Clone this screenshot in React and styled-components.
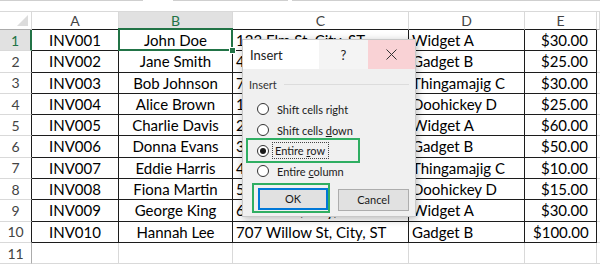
import React from "react";
import styled, { createGlobalStyle, css } from "styled-components";

const GREEN = "#217346";
const MARK = "#2fae62";
const GRID = "#d9d9d9";
const INK = "#1c1c1c";

const rows = [
    ["INV001", "John Doe", "123 Elm St, City, ST", "Widget A", "$30.00"],
    ["INV002", "Jane Smith", "456 Oak St, City, ST", "Gadget B", "$25.00"],
    ["INV003", "Bob Johnson", "789 Pine St, City, ST", "Thingamajig C", "$30.00"],
    ["INV004", "Alice Brown", "101 Maple St, City, ST", "Doohickey D", "$25.00"],
    ["INV005", "Charlie Davis", "202 Birch St, City, ST", "Widget A", "$60.00"],
    ["INV006", "Donna Evans", "303 Cedar St, City, ST", "Gadget B", "$50.00"],
    ["INV007", "Eddie Harris", "404 Spruce St, City, ST", "Thingamajig C", "$10.00"],
    ["INV008", "Fiona Martin", "505 Ash St, City, ST", "Doohickey D", "$15.00"],
    ["INV009", "George King", "606 Fir St, City, ST", "Widget A", "$30.00"],
    ["INV010", "Hannah Lee", "707 Willow St, City, ST", "Gadget B", "$100.00"],
];
const letters = ["A", "B", "C", "D", "E"];
const aligns = ["center", "center", "left", "left", "right"];

export default function App() {
    return (
        <>
            <GlobalStyle/>
            <Page>
                <TopStrip>
                    <StripSegment $w={143}/>
                    <StripGap $w={30}/>
                    <StripSegment $w={115}/>
                    <StripGap $w={4}/>
                    <StripSegment $w={308}/>
                </TopStrip>
                <Sheet>
                    <Corner><CornerMark/></Corner>
                    {letters.map((l) => (
                        <ColHead key={l} $selected={l === "B"}>{l}</ColHead>
                    ))}
                    <ColHead $rest/>
                    {rows.map((r, i) => (
                        <React.Fragment key={i}>
                            <RowHead $selected={i === 0} $data>{i + 1}</RowHead>
                            {r.map((v, j) => (
                                <Cell key={j} $align={aligns[j]} $active={i === 0 && j === 1}>
                                    {v}
                                </Cell>
                            ))}
                            <EmptyCell $rest/>
                        </React.Fragment>
                    ))}
                    <RowHead>11</RowHead>
                    {letters.map((l) => <EmptyCell key={l}/>)}
                    <EmptyCell $rest/>
                </Sheet>

                <Dialog>
                    <TitleBar>
                        <Title>Insert</Title>
                        <HelpButton>?</HelpButton>
                        <CloseButton>
                            <svg width="11" height="11" viewBox="0 0 11 11">
                                <path d="M0.5 0.5 L10.5 10.5 M10.5 0.5 L0.5 10.5" stroke="#333" strokeWidth="1"/>
                            </svg>
                        </CloseButton>
                    </TitleBar>
                    <Body>
                        <GroupLabel>Insert<GroupLine/></GroupLabel>
                        <Options>
                            <Option><Radio/><span>Shift cells right</span></Option>
                            <Option><Radio/><span>Shift cells <u>d</u>own</span></Option>
                            <Option $highlight><Radio $checked/><Focus>Entire <u>r</u>ow</Focus></Option>
                            <Option><Radio/><span>Entire <u>c</u>olumn</span></Option>
                        </Options>
                        <ButtonRow>
                            <GreenFrame>
                                <Button $default>OK</Button>
                            </GreenFrame>
                            <Button $cancel>Cancel</Button>
                        </ButtonRow>
                    </Body>
                </Dialog>
            </Page>
        </>
    );
}

const GlobalStyle = createGlobalStyle`
  html, body {
    margin: 0;
    padding: 0;
    background: #fff;
  }
  body {
    font-family: Lato, "Liberation Sans", sans-serif;
  }
`;

const Page = styled.div`
  position: relative;
  width: 600px;
  height: 266px;
  overflow: hidden;
  background: #fff;
`;

const TopStrip = styled.div`
  display: flex;
  height: 11px;
`;
const StripSegment = styled.div`
  width: ${(p) => p.$w}px;
  height: 1px;
  background: #cfcfcf;
`;
const StripGap = styled.div`
  width: ${(p) => p.$w}px;
`;

const Sheet = styled.div`
  display: grid;
  grid-template-columns: 32px 87px 114px 176px 116px 72px 1fr;
  grid-template-rows: 19px repeat(11, 21.3px);
  font-family: Lato, "Liberation Sans", sans-serif;
`;

const Corner = styled.div`
  position: relative;
  border-right: 1px solid ${GRID};
  border-bottom: 1px solid #ababab;
  border-top: 1px solid ${GRID};
`;
const CornerMark = styled.div`
  position: absolute;
  right: 3px;
  bottom: 3px;
  width: 0;
  height: 0;
  border-left: 11px solid transparent;
  border-bottom: 11px solid #dcdcdc;
`;

const ColHead = styled.div`
  display: flex;
  align-items: center;
  justify-content: center;
  font-size: 14px;
  color: #444;
  border-top: 1px solid ${GRID};
  border-right: 1px solid ${GRID};
  border-bottom: 1px solid ${(p) => (p.$rest ? "#ababab" : INK)};
  ${(p) => p.$selected && css`
    background: #e1e1e1;
    color: ${GREEN};
    border-bottom: 2px solid ${GREEN};
  `}
`;

const RowHead = styled.div`
  display: flex;
  align-items: center;
  justify-content: center;
  font-size: 14px;
  color: #444;
  border-bottom: 1px solid ${GRID};
  border-right: 1px solid ${(p) => (p.$data ? INK : "#ababab")};
  ${(p) => p.$selected && css`
    background: #e1e1e1;
    color: ${GREEN};
    border-right: 2px solid ${GREEN};
  `}
`;

const Cell = styled.div`
  position: relative;
  box-sizing: border-box;
  font-size: 15px;
  color: #000;
  line-height: 21px;
  white-space: nowrap;
  overflow: visible;
  text-align: ${(p) => p.$align};
  padding: 0 ${(p) => (p.$align === "right" ? 8 : 3)}px;
  border-right: 1px solid ${INK};
  border-bottom: 1px solid ${INK};
  ${(p) => p.$active && css`
    &::after {
      content: "";
      position: absolute;
      inset: -2px -1px -1px -1px;
      border: 2px solid ${GREEN};
    }
    &::before {
      content: "";
      position: absolute;
      right: -4px;
      bottom: -4px;
      width: 5px;
      height: 5px;
      background: ${GREEN};
      border: 1px solid #fff;
      z-index: 1;
    }
  `}
`;

const EmptyCell = styled.div`
  border-right: ${(p) => (p.$rest ? "none" : `1px solid ${GRID}`)};
  border-bottom: 1px solid ${GRID};
`;

const Dialog = styled.div`
  position: absolute;
  left: 242px;
  top: 39px;
  width: 174px;
  height: 178px;
  box-sizing: border-box;
  background: #f0f0f0;
  border: 1px solid #c8c8c8;
  box-shadow: 1px 2px 8px rgba(0, 0, 0, 0.28);
  font-family: Lato, "Noto Sans", sans-serif;
  color: #1a1a1a;
  display: flex;
  flex-direction: column;
`;

const TitleBar = styled.div`
  display: flex;
  height: 29px;
  background: #fff;
`;
const Title = styled.div`
  flex: 1;
  display: flex;
  align-items: center;
  padding-left: 7px;
  font-size: 13px;
  color: #222;
`;
const HelpButton = styled.div`
  width: 49px;
  display: flex;
  align-items: center;
  justify-content: center;
  font-size: 13px;
  background: #f4f4f4;
  color: #222;
`;
const CloseButton = styled.div`
  width: 47px;
  display: flex;
  align-items: center;
  justify-content: center;
  background: #f9d2d5;
`;

const Body = styled.div`
  padding: 8px 0 0 6px;
`;

const GroupLabel = styled.div`
  display: flex;
  align-items: center;
  height: 14px;
  font-size: 11px;
  color: #333;
`;
const GroupLine = styled.div`
  flex: 1;
  height: 1px;
  background: #dcdcdc;
  margin: 0 6px 0 7px;
`;

const Options = styled.div`
  display: flex;
  flex-direction: column;
  margin-top: 8px;
  width: 109px;
`;
const Option = styled.div`
  display: flex;
  align-items: center;
  height: 20.7px;
  padding-left: 8px;
  gap: 8px;
  font-size: 11px;
  color: #1a1a1a;
  white-space: nowrap;
  ${(p) => p.$highlight && css`
    outline: 2px solid ${MARK};
    outline-offset: 0;
    margin-left: -1px;
    padding-left: 9px;
    width: 110px;
    box-sizing: border-box;
  `}
  u {
    text-underline-offset: 1px;
  }
`;
const Radio = styled.span`
  box-sizing: border-box;
  flex: none;
  width: 12px;
  height: 12px;
  border-radius: 50%;
  border: 1px solid #333;
  background: #fff;
  display: flex;
  align-items: center;
  justify-content: center;
  ${(p) => p.$checked && css`
    &::after {
      content: "";
      width: 6px;
      height: 6px;
      border-radius: 50%;
      background: #1a1a1a;
    }
  `}
`;
const Focus = styled.span`
  outline: 1px dotted #444;
  outline-offset: 1px;
  padding: 0 2px 0 1px;
  margin-left: -3px;
`;

const ButtonRow = styled.div`
  display: flex;
  align-items: flex-start;
  margin-top: 1px;
  padding-left: 3px;
`;
const GreenFrame = styled.div`
  border: 2px solid ${MARK};
  padding: 3px 0 1px 4px;
`;
const Button = styled.div`
  box-sizing: border-box;
  width: 70px;
  height: 22px;
  display: flex;
  align-items: center;
  justify-content: center;
  font-size: 11px;
  background: #e1e1e1;
  color: #1a1a1a;
  border: 1px solid #adadad;
  ${(p) => p.$default && css`
    border: 2px solid #0078d7;
  `}
  ${(p) => p.$cancel && css`
    margin-left: 8px;
    margin-top: 6px;
    width: 71px;
  `}
`;
